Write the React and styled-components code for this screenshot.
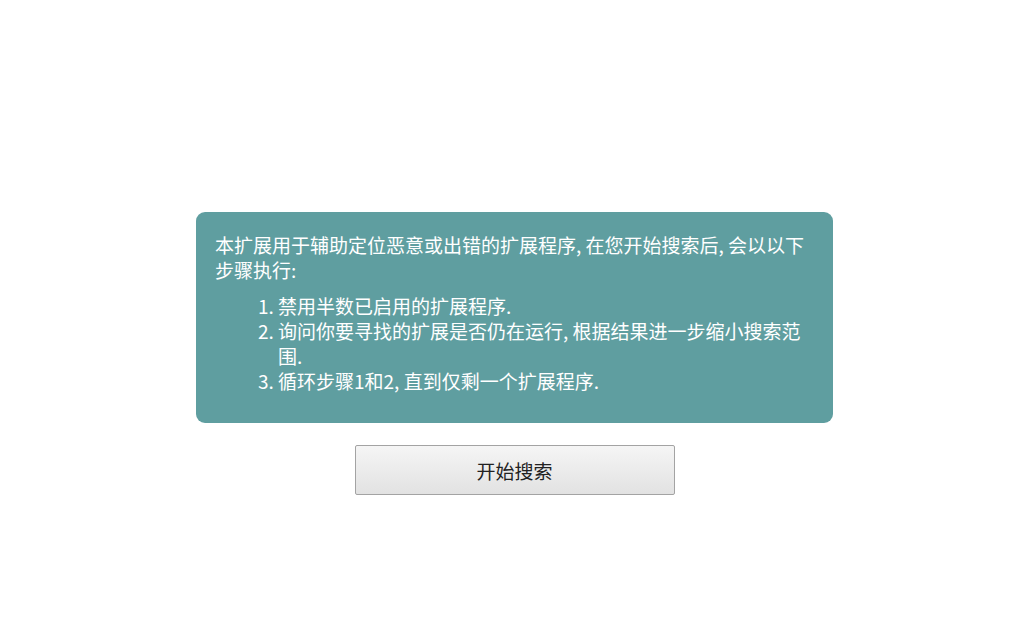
import { createGlobalStyle, styled } from 'styled-components';

const GlobalStyle = createGlobalStyle`
    html, body {
        margin: 0;
        padding: 0;
        background-color: #FFFFFF;
        font-family: "Noto Sans CJK SC", "Noto Sans", sans-serif;
    }
`;

const Page = styled.main`
    display: flex;
    flex-direction: column;
    align-items: center;
    padding: 212px 0 0 9px;
`;

const InfoPanel = styled.section`
    box-sizing: border-box;
    width: 637px;
    padding: 20px 19px 30px;
    background-color: #5F9EA0;
    border-radius: 9px;
    color: #FFFFFF;
    font-size: 19px;
    line-height: 25px;
`;

const Intro = styled.p`
    margin: 0;
`;

const StepList = styled.ol`
    margin: 11px 0 0;
    padding-left: 63px;
`;

const StartButton = styled.button`
    box-sizing: border-box;
    width: 320px;
    height: 50px;
    margin-top: 22px;
    border: 1px solid #A3A3A3;
    border-radius: 2px;
    background: linear-gradient(#F5F5F5, #E2E2E2);
    color: #222222;
    font-family: inherit;
    font-size: 19px;
    cursor: pointer;
`;

const steps = [
    '禁用半数已启用的扩展程序.',
    '询问你要寻找的扩展是否仍在运行, 根据结果进一步缩小搜索范围.',
    '循环步骤1和2, 直到仅剩一个扩展程序.',
];

export default function App() {
    return (
        <>
            <GlobalStyle />
            <Page>
                <InfoPanel>
                    <Intro>本扩展用于辅助定位恶意或出错的扩展程序, 在您开始搜索后, 会以以下步骤执行:</Intro>
                    <StepList>
                        {steps.map((s) => (
                            <li key={s}>{s}</li>
                        ))}
                    </StepList>
                </InfoPanel>
                <StartButton>开始搜索</StartButton>
            </Page>
        </>
    );
}
